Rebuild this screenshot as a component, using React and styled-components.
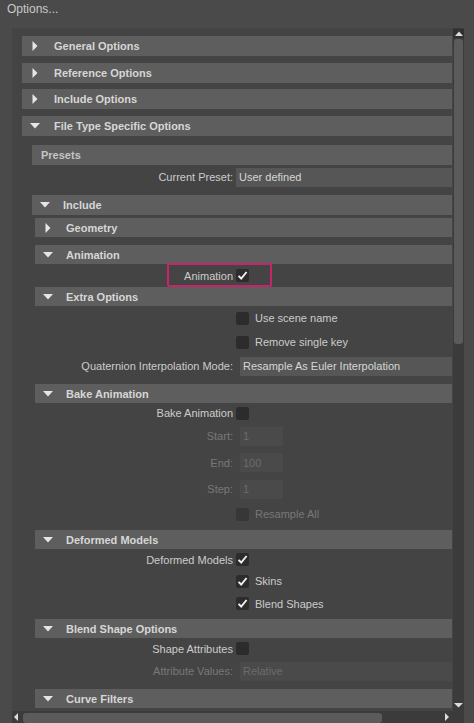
import React from 'react'
import styled, { createGlobalStyle } from 'styled-components'

const GlobalStyle = createGlobalStyle`
	html, body {
		margin: 0;
		padding: 0;
		background: #4a4a4a;
	}
	body {
		font-family: "Liberation Sans", Arial, sans-serif;
		font-size: 11px;
		color: #cccccc;
	}
`

const Window = styled.div`
	width: 474px;
	height: 723px;
	display: flex;
	flex-direction: column;
	background: #4a4a4a;
	overflow: hidden;
`

const TitleBar = styled.div`
	height: 28px;
	flex: none;
	box-sizing: border-box;
	padding: 2px 7px 0;
	font-size: 12px;
	line-height: 15px;
	color: #c9c9c9;
`

const ScrollArea = styled.div`
	flex: 1;
	min-height: 0;
	margin: 0 10px 0 12px;
	display: grid;
	grid-template-columns: 1fr 11px;
	grid-template-rows: 1fr 12px;
	background: #444444;
`

const Viewport = styled.div`
	overflow: hidden;
	padding: 8px 1px 0 10px;
	display: flex;
	flex-direction: column;
`

const VScroll = styled.div`
	background: #3b3b3b;
	display: flex;
	flex-direction: column;
	align-items: center;
	padding: 1px 0 3px;
`

const HScroll = styled.div`
	background: #3b3b3b;
	display: flex;
	align-items: center;
	padding: 0 4px 0 1px;
`

const Corner = styled.div`
	background: #3b3b3b;
`

const ArrowBox = styled.div`
	flex: none;
	display: flex;
	align-items: center;
	justify-content: center;
	width: ${p => p.$w}px;
	height: ${p => p.$h}px;
	background: ${p => p.$bg || 'transparent'};
`

const VThumb = styled.div`
	width: 9px;
	height: 305px;
	margin-top: 1px;
	border-radius: 3px;
	background: #5b5b5b;
`

const HThumb = styled.div`
	height: 10px;
	width: 359px;
	margin: 2px 0 0 5px;
	border-radius: 3px;
	background: #5b5b5b;
`

const Spacer = styled.div`
	flex: 1;
`

const Header = styled.div`
	flex: none;
	position: relative;
	display: flex;
	align-items: center;
	height: ${p => (p.$level > 1 ? 19 : 20)}px;
	margin-top: ${p => p.$mt || 0}px;
	margin-left: ${p => [0, 10, 13][p.$level]}px;
	padding-left: ${p => (p.$plain ? 9 : 6)}px;
	background: #5e5e5e;
	font-weight: bold;
	color: ${p => (p.$plain ? '#c4c4c4' : '#d6d6d6')};
`

const Toggle = styled.span`
	width: 13px;
	height: 12px;
	display: flex;
	align-items: center;
	justify-content: center;
	margin-right: ${p => (p.$level === 0 ? 13 : 12)}px;
`

const Row = styled.div`
	flex: none;
	position: relative;
	display: grid;
	grid-template-columns: 211px 1fr;
	column-gap: 3px;
	align-items: center;
	height: ${p => p.$h}px;
`

const Label = styled.span`
	text-align: right;
	white-space: nowrap;
	color: ${p => (p.$disabled ? '#787878' : '#cccccc')};
`

const Control = styled.div`
	display: flex;
	align-items: center;
	gap: 6px;
	min-width: 0;
	white-space: nowrap;
	color: ${p => (p.$disabled ? '#787878' : '#cccccc')};
`

const Box = styled.span`
	flex: none;
	width: 13px;
	height: 13px;
	border-radius: 2px;
	display: flex;
	align-items: center;
	justify-content: center;
	background: ${p => (p.$disabled ? '#373737' : '#2c2c2c')};
`

const Field = styled.div`
	box-sizing: border-box;
	height: 19px;
	display: flex;
	align-items: center;
	margin-left: ${p => (p.$flush ? 0 : 4)}px;
	padding-left: 3px;
	width: ${p => (p.$w ? `${p.$w}px` : 'auto')};
	flex: ${p => (p.$w ? 'none' : 1)};
	background: ${p => (p.$disabled ? '#4a4a4a' : '#565656')};
	color: ${p => (p.$disabled ? '#6c6c6c' : '#d6d6d6')};
`

const Highlight = styled.span`
	position: absolute;
	left: 145px;
	top: -1px;
	width: 105px;
	height: 24px;
	box-sizing: border-box;
	border: 2px solid #c8246a;
	border-radius: 2px;
	pointer-events: none;
`

const Gap = styled.div`
	flex: none;
	height: ${p => p.$h}px;
`

const Tri = ({ dir }) =>
	dir === 'down' ? (
		<svg width="10" height="6" viewBox="0 0 10 6">
			<polygon points="0,0 10,0 5,5.5" fill="#e6e6e6" />
		</svg>
	) : (
		<svg width="6" height="10" viewBox="0 0 6 10">
			<polygon points="0.5,0 5.5,5 0.5,10" fill="#e6e6e6" />
		</svg>
	)

const Check = ({ checked, disabled }) => (
	<Box $disabled={disabled}>
		{checked && (
			<svg width="11" height="11" viewBox="0 0 11 11">
				<polyline
					points="1.5,5.8 4.2,8.5 9.6,2"
					fill="none"
					stroke="#f0f0f0"
					strokeWidth="1.9"
				/>
			</svg>
		)}
	</Box>
)

const Frame = ({ title, level = 0, open, plain, mt }) => (
	<Header $level={level} $mt={mt} $plain={plain}>
		{!plain && (
			<Toggle $level={level}>
				<Tri dir={open ? 'down' : 'right'} />
			</Toggle>
		)}
		{title}
	</Header>
)

const CheckRow = ({ h, label, text, checked, disabled, children }) => (
	<Row $h={h}>
		<Label $disabled={disabled}>{label}</Label>
		<Control $disabled={disabled}>
			<Check checked={checked} disabled={disabled} />
			{text}
		</Control>
		{children}
	</Row>
)

const FieldRow = ({ h, label, value, w, disabled, flush }) => (
	<Row $h={h}>
		<Label $disabled={disabled}>{label}</Label>
		<Control>
			<Field $w={w} $disabled={disabled} $flush={flush}>
				{value}
			</Field>
		</Control>
	</Row>
)

export default function App() {
	return (
		<>
			<GlobalStyle />
			<Window>
				<TitleBar>Options...</TitleBar>
				<ScrollArea>
					<Viewport>
						<Frame title="General Options" />
						<Frame title="Reference Options" mt={7} />
						<Frame title="Include Options" mt={6} />
						<Frame title="File Type Specific Options" open mt={7} />

						<Frame title="Presets" level={1} plain mt={9} />
						<FieldRow h={24} label="Current Preset:" value="User defined" flush />

						<Frame title="Include" level={1} open mt={6} />
						<Frame title="Geometry" level={2} mt={3} />
						<Frame title="Animation" level={2} open mt={8} />
						<CheckRow h={23} label="Animation" checked>
							<Highlight />
						</CheckRow>

						<Frame title="Extra Options" level={2} open />
						<CheckRow h={24} text="Use scene name" />
						<CheckRow h={24} text="Remove single key" />
						<FieldRow
							h={24}
							label="Quaternion Interpolation Mode:"
							value="Resample As Euler Interpolation"
						/>

						<Frame title="Bake Animation" level={2} open mt={6} />
						<CheckRow h={20} label="Bake Animation" />
						<FieldRow h={26} label="Start:" value="1" w={43} disabled />
						<FieldRow h={27} label="End:" value="100" w={43} disabled />
						<FieldRow h={26} label="Step:" value="1" w={43} disabled />
						<CheckRow h={24} text="Resample All" disabled />

						<Frame title="Deformed Models" level={2} open mt={4} />
						<CheckRow h={21} label="Deformed Models" checked />
						<CheckRow h={22} text="Skins" checked />
						<CheckRow h={23} text="Blend Shapes" checked />

						<Frame title="Blend Shape Options" level={2} open mt={4} />
						<CheckRow h={21} label="Shape Attributes" />
						<FieldRow h={24} label="Attribute Values:" value="Relative" disabled />

						<Frame title="Curve Filters" level={2} open mt={6} />
						<Gap $h={40} />
					</Viewport>

					<VScroll>
						<ArrowBox $w={11} $h={9} $bg="#303030">
							<svg width="8" height="5" viewBox="0 0 8 5">
								<polygon points="0,5 8,5 4,0.5" fill="#dcdcdc" />
							</svg>
						</ArrowBox>
						<VThumb />
						<Spacer />
						<ArrowBox $w={11} $h={6}>
							<svg width="9" height="5" viewBox="0 0 9 5">
								<polygon points="0,0 9,0 4.5,4.5" fill="#dcdcdc" />
							</svg>
						</ArrowBox>
					</VScroll>

					<HScroll>
						<ArrowBox $w={5} $h={12}>
							<svg width="4" height="8" viewBox="0 0 4 8">
								<polygon points="4,0 4,8 0,4" fill="#dcdcdc" />
							</svg>
						</ArrowBox>
						<HThumb />
						<Spacer />
						<ArrowBox $w={5} $h={12}>
							<svg width="4" height="8" viewBox="0 0 4 8">
								<polygon points="0,0 0,8 4,4" fill="#dcdcdc" />
							</svg>
						</ArrowBox>
					</HScroll>
					<Corner />
				</ScrollArea>
			</Window>
		</>
	)
}
